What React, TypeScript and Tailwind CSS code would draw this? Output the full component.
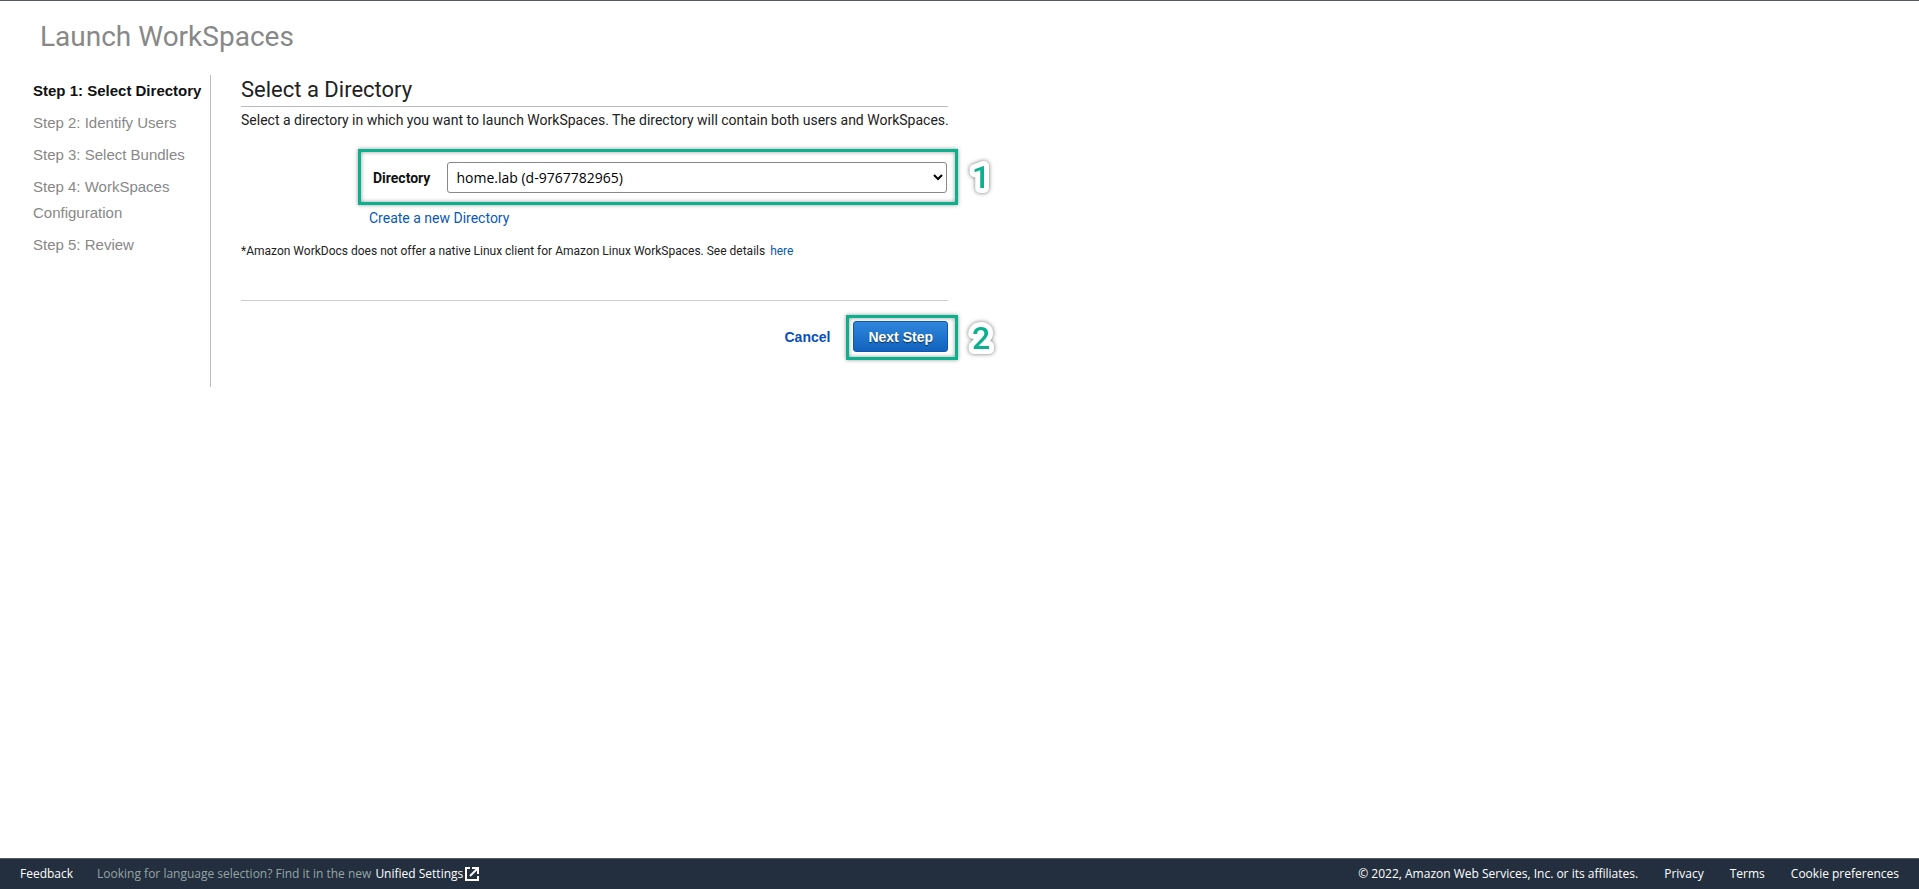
import { useState, FormEvent } from "react";

const STEPS = [
  "Step 1: Select Directory",
  "Step 2: Identify Users",
  "Step 3: Select Bundles",
  "Step 4: WorkSpaces Configuration",
  "Step 5: Review",
];

const DIRECTORIES = [{ id: "d-9767782965", name: "home.lab" }];

const FOOTER_LINKS = ["Privacy", "Terms", "Cookie preferences"];

// svg text, so the white outline gets rounded corners
function Callout({ label }: { label: string }) {
  return (
    <svg
      viewBox="0 0 40 40"
      className="absolute top-1/2 left-full ml-1.5 h-10 w-10 -translate-y-1/2 overflow-visible drop-shadow-[0_0_2px_rgba(0,0,0,0.55)]"
    >
      <text
        x="20"
        y="31"
        textAnchor="middle"
        stroke="white"
        strokeWidth="10"
        strokeLinejoin="round"
        paintOrder="stroke"
        className="fill-[#0bb08f] font-['Roboto',sans-serif] text-[32px] font-medium"
      >
        {label}
      </text>
    </svg>
  );
}

function ExternalIcon() {
  return (
    <svg viewBox="0 0 14 14" fill="none" stroke="currentColor" strokeWidth="2" className="h-3.5 w-3.5">
      <path d="M5 1H1v12h12V9" />
      <path d="M7 1h6v6" />
      <path d="M13 1 5 9" />
    </svg>
  );
}

export default function App() {
  const [step] = useState(0);
  const [directory, setDirectory] = useState(DIRECTORIES[0].id);

  function handleSubmit(e: FormEvent) {
    e.preventDefault();
  }

  return (
    <div className="flex min-h-screen flex-col border-t border-[#545b64] bg-white font-['Roboto',sans-serif] text-[#222]">
      <header className="px-10 pt-[17px] pb-[19px]">
        <h1 className="text-[28px] leading-[38px] text-[#888]">Launch WorkSpaces</h1>
      </header>

      <main className="flex">
        {/* Wizard steps */}
        <nav className="min-h-[312px] w-[211px] shrink-0 border-r border-[#bbb] pt-[3px] pl-[33px]">
          <ol className="flex flex-col gap-1.5 font-['Liberation_Sans',Arial,sans-serif] text-[15px] leading-[26px]">
            {STEPS.map((label, i) => (
              <li
                key={label}
                className={i === step ? "font-bold whitespace-nowrap text-[#111]" : "text-[#888]"}
              >
                {label}
              </li>
            ))}
          </ol>
        </nav>

        <form onSubmit={handleSubmit} className="ml-[30px] max-w-[707px] flex-1">
          <h2 className="border-b border-[#bbb] pt-px pb-0.5 text-[22px] leading-7">Select a Directory</h2>
          <p className="mt-[3px] text-sm leading-5 whitespace-nowrap">
            Select a directory in which you want to launch WorkSpaces. The directory will contain both users and
            WorkSpaces.
          </p>

          <div className="relative mt-[19px] -mr-2.5 ml-[117px] flex items-center gap-[17px] border-[3px] border-[#0bb08f] pt-2.5 pr-2 pb-[9px] pl-3 shadow-[0_0_4px_rgba(0,0,0,0.4),inset_0_0_4px_rgba(0,0,0,0.4)]">
            <label htmlFor="directory" className="text-sm font-bold text-[#111]">
              Directory
            </label>
            <select
              id="directory"
              value={directory}
              onChange={(e) => setDirectory(e.target.value)}
              className="h-[31px] flex-1 rounded-[3px] border border-[#888] bg-white px-1 font-['Open_Sans',sans-serif] text-sm text-black"
            >
              {DIRECTORIES.map((d) => (
                <option key={d.id} value={d.id}>
                  {d.name} ({d.id})
                </option>
              ))}
            </select>
            <Callout label="1" />
          </div>

          <a href="#create" className="mt-[3px] ml-32 block w-fit text-sm leading-5 text-[#0a58b5]">
            Create a new Directory
          </a>

          <p className="mt-[13px] text-xs leading-5">
            *Amazon WorkDocs does not offer a native Linux client for Amazon Linux WorkSpaces. See details{" "}
            <a href="#details" className="ml-0.5 text-[#0a58b5]">
              here
            </a>
          </p>

          <hr className="mt-[39px] border-[#ccc]" />

          <div className="mt-3.5 -mr-2.5 flex items-center justify-end gap-4 font-['Liberation_Sans',Arial,sans-serif] text-sm font-bold">
            <button type="button" className="pb-0.5 text-[#0a4fb5]">
              Cancel
            </button>
            <div className="relative border-[3px] border-[#0bb08f] pt-[3px] pr-[7px] pb-[5px] pl-1 shadow-[0_0_4px_rgba(0,0,0,0.4),inset_0_0_4px_rgba(0,0,0,0.4)]">
              <button
                type="submit"
                className="block h-[31px] rounded-[3px] border border-[#0f57ad] bg-gradient-to-b from-[#2f86dd] to-[#1163bd] px-3.5 text-white [text-shadow:0_1px_1px_rgba(0,0,0,0.6)]"
              >
                Next Step
              </button>
              <Callout label="2" />
            </div>
          </div>
        </form>
      </main>

      <footer className="mt-auto flex items-center justify-between border-t border-[#545b64] bg-[#232f3e] px-5 font-['Open_Sans',sans-serif] text-xs leading-[30px] text-white">
        <div className="flex items-center">
          <a href="#feedback" className="mr-6 font-medium">
            Feedback
          </a>
          <span className="mr-1 text-[#95a5a6]">Looking for language selection? Find it in the new</span>
          <a href="#settings" className="flex items-center gap-0.5 font-medium">
            Unified Settings
            <ExternalIcon />
          </a>
        </div>
        <div className="flex items-center gap-[26px]">
          <span>© 2022, Amazon Web Services, Inc. or its affiliates.</span>
          {FOOTER_LINKS.map((label) => (
            <a key={label} href="#legal">
              {label}
            </a>
          ))}
        </div>
      </footer>
    </div>
  );
}
